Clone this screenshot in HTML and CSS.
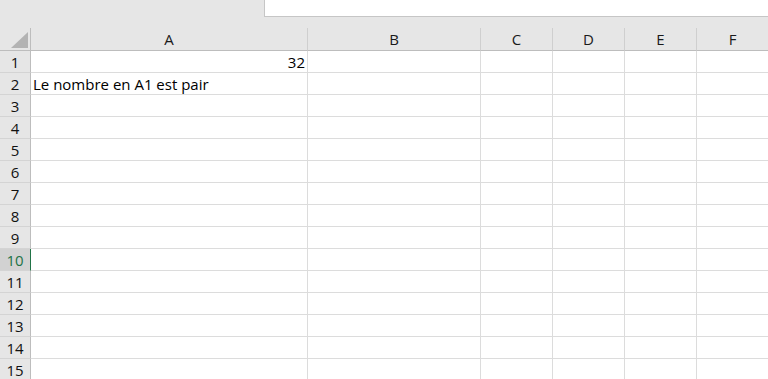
FILE: index.html
```html
<!DOCTYPE html>
<html lang="fr">
<head>
<meta charset="utf-8">
<title>Feuille</title>
<link rel="stylesheet" href="styles.css">
</head>
<body>
<div class="topbar"><div class="namebox"></div></div>
<div class="sheet">
  <div class="spacer"></div>
  <div class="hcell corner"><svg width="17" height="16" viewBox="0 0 17 16"><polygon points="0,16 17,16 17,0" fill="#b3b3b3"/></svg></div>
  <div class="hcell">A</div>
  <div class="hcell">B</div>
  <div class="hcell">C</div>
  <div class="hcell">D</div>
  <div class="hcell">E</div>
  <div class="hcell">F</div>

  <div class="rh">1</div><div class="c num">32</div><div class="c"></div><div class="c"></div><div class="c"></div><div class="c"></div><div class="c"></div>
  <div class="rh">2</div><div class="c txt">Le nombre en A1 est pair</div><div class="c"></div><div class="c"></div><div class="c"></div><div class="c"></div><div class="c"></div>
  <div class="rh">3</div><div class="c"></div><div class="c"></div><div class="c"></div><div class="c"></div><div class="c"></div><div class="c"></div>
  <div class="rh">4</div><div class="c"></div><div class="c"></div><div class="c"></div><div class="c"></div><div class="c"></div><div class="c"></div>
  <div class="rh">5</div><div class="c"></div><div class="c"></div><div class="c"></div><div class="c"></div><div class="c"></div><div class="c"></div>
  <div class="rh">6</div><div class="c"></div><div class="c"></div><div class="c"></div><div class="c"></div><div class="c"></div><div class="c"></div>
  <div class="rh">7</div><div class="c"></div><div class="c"></div><div class="c"></div><div class="c"></div><div class="c"></div><div class="c"></div>
  <div class="rh">8</div><div class="c"></div><div class="c"></div><div class="c"></div><div class="c"></div><div class="c"></div><div class="c"></div>
  <div class="rh">9</div><div class="c"></div><div class="c"></div><div class="c"></div><div class="c"></div><div class="c"></div><div class="c"></div>
  <div class="rh active">10</div><div class="c"></div><div class="c"></div><div class="c"></div><div class="c"></div><div class="c"></div><div class="c"></div>
  <div class="rh">11</div><div class="c"></div><div class="c"></div><div class="c"></div><div class="c"></div><div class="c"></div><div class="c"></div>
  <div class="rh">12</div><div class="c"></div><div class="c"></div><div class="c"></div><div class="c"></div><div class="c"></div><div class="c"></div>
  <div class="rh">13</div><div class="c"></div><div class="c"></div><div class="c"></div><div class="c"></div><div class="c"></div><div class="c"></div>
  <div class="rh">14</div><div class="c"></div><div class="c"></div><div class="c"></div><div class="c"></div><div class="c"></div><div class="c"></div>
  <div class="rh">15</div><div class="c"></div><div class="c"></div><div class="c"></div><div class="c"></div><div class="c"></div><div class="c"></div>
</div>
</body>
</html>
```
FILE: styles.css
```css
html, body {
  margin: 0;
  padding: 0;
  background: #e6e6e6;
  overflow: hidden;
  font-family: "Open Sans", "Noto Sans", sans-serif;
  font-size: 15px;
  color: #111;
}
.topbar {
  height: 17px;
  display: flex;
}
.namebox {
  margin-left: 264px;
  flex: 1;
  height: 16px;
  background: #fff;
  border-left: 1px solid #c6c6c6;
  border-bottom: 1px solid #c6c6c6;
}
.sheet {
  display: grid;
  grid-template-columns: 31px 277px 173px 72px 72px 72px 72px;
  grid-template-rows: 11px 23px;
  grid-auto-rows: 22px;
  width: 769px;
}
.spacer {
  grid-column: 1 / -1;
}
.hcell {
  box-sizing: border-box;
  height: 23px;
  border-right: 1px solid #cfcfcf;
  border-bottom: 1px solid #bdbdbd;
  display: flex;
  align-items: center;
  justify-content: center;
  padding-bottom: 1px;
  color: #1a1a1a;
  background: #e6e6e6;
}
.corner {
  justify-content: flex-end;
  align-items: flex-end;
  padding: 0 2px 2px 0;
  border-right-color: #bdbdbd;
}
.corner svg { display: block; }
.rh {
  box-sizing: border-box;
  height: 22px;
  background: #e6e6e6;
  border-right: 1px solid #bdbdbd;
  border-bottom: 1px solid #d4d4d4;
  display: flex;
  align-items: center;
  justify-content: center;
  color: #111;
}
.rh.active {
  background: #d2d2d2;
  color: #217346;
  border-right: 1px solid #217346;
}
.c {
  box-sizing: border-box;
  height: 22px;
  background: #fff;
  border-right: 1px solid #dcdcdc;
  border-bottom: 1px solid #dcdcdc;
  display: flex;
  align-items: center;
  white-space: nowrap;
  color: #000;
}
.c.num {
  justify-content: flex-end;
  padding-right: 2px;
}
.c.txt {
  padding-left: 2px;
}
```
